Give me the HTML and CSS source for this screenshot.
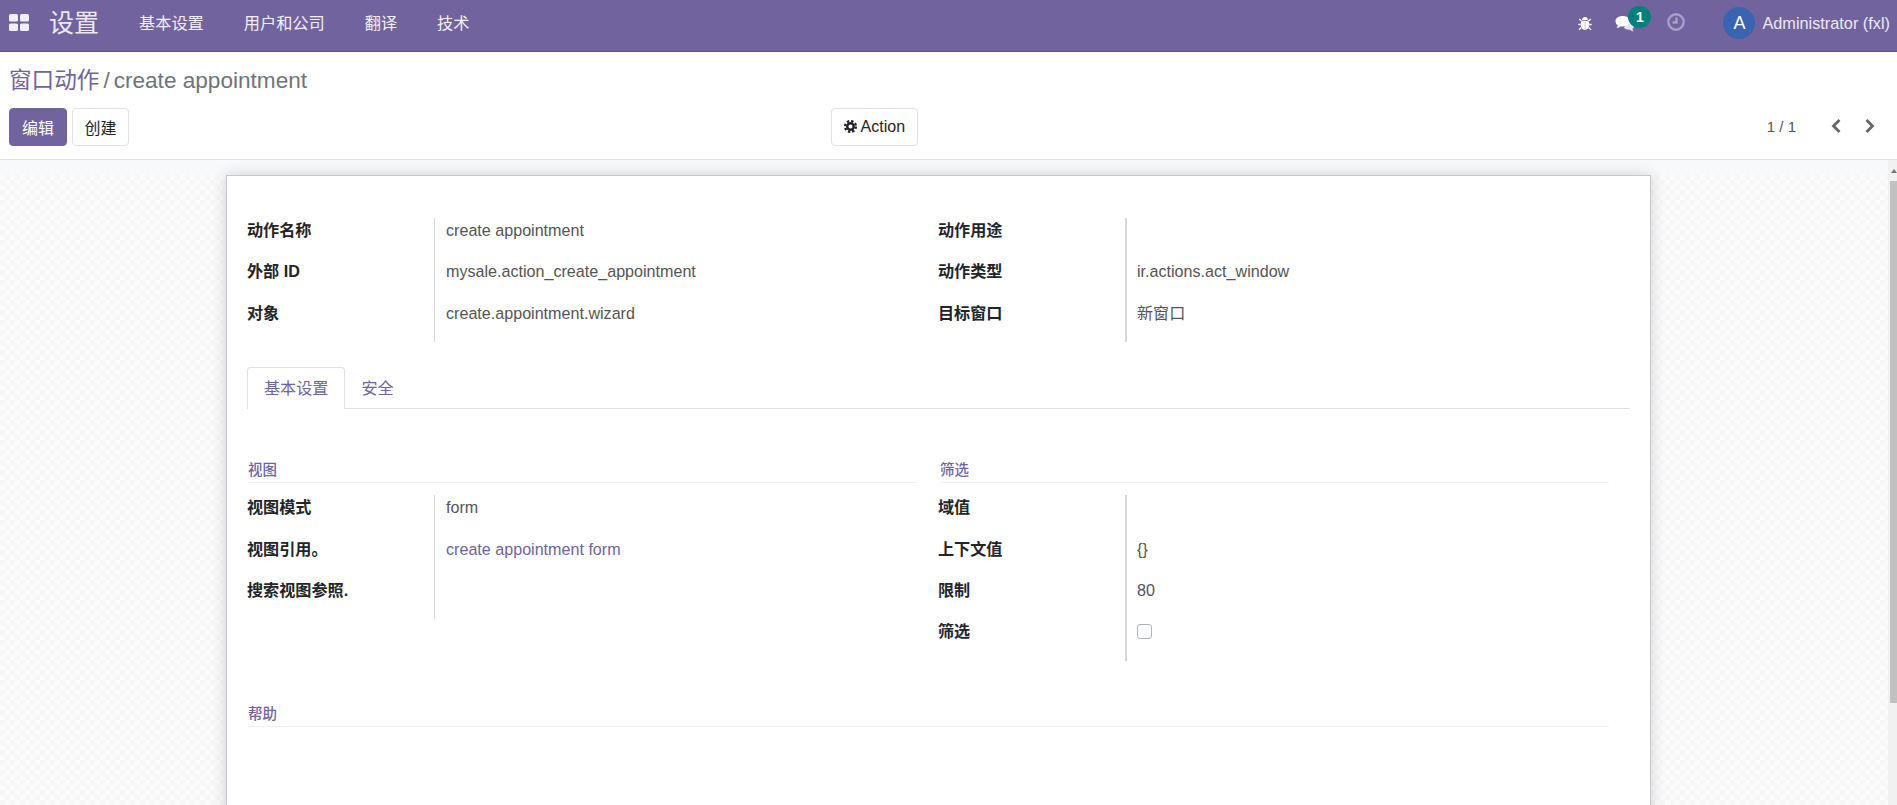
FILE: index.html

```html
<!DOCTYPE html>
<html lang="zh-CN">
<head>
    <meta charset="UTF-8">
    <title>create appointment</title>
    <link rel="stylesheet" href="styles.css">
</head>
<body>
    <!-- Top menu -->
    <header class="navbar">
        <svg class="apps-icon" viewBox="0 0 20 17" width="20" height="17">
            <rect x="0" y="0" width="9" height="7.5" rx="1.6"/>
            <rect x="11" y="0" width="9" height="7.5" rx="1.6"/>
            <rect x="0" y="9.5" width="9" height="7.5" rx="1.6"/>
            <rect x="11" y="9.5" width="9" height="7.5" rx="1.6"/>
        </svg>
        <span class="brand">设置</span>
        <nav class="menu">
            <a>基本设置</a>
            <a>用户和公司</a>
            <a>翻译</a>
            <a>技术</a>
        </nav>
        <div class="systray">
            <svg class="bug-icon" viewBox="0 0 14 15" width="14" height="15">
                <path d="M4 4.2C4 2.2 5.3 1 7 1s3 1.2 3 3.2z"/>
                <path d="M3.6 5h6.8c.7 1 .9 2.2.9 3.6 0 3-1.800 5.400-4.300 5.400S2.700 11.600 2.700 8.600c0-1.400.2-2.600.9-3.600z"/>
                <path class="bug-legs" d="M3.600 5 1.200 3M10.400 5l2.400-2M2.800 8.500H.3M11.200 8.500h2.500M3.300 11.500 1 13.700M10.700 11.500l2.300 2.200"/>
                <path class="bug-stripe" d="M7 6v7.500"/>
            </svg>
            <div class="messages">
                <svg viewBox="0 0 20 17" width="20" height="17">
                    <path class="bubble-back" d="M13 7c3 0 6 1.600 6 4 0 1.300-.7 2.200-1.500 2.900.1.900.6 1.700 1.200 2.300-1.500 0-2.900-.7-3.800-1.500-2.500.2-5-.6-6-2.200z"/>
                    <path d="M7.800 1C12 1 15 3.200 15 6.200s-3 5.200-7.200 5.200c-.8 0-1.500-.1-2.200-.2-1 .9-2.500 1.600-4.100 1.700.7-.8 1.200-1.700 1.300-2.700C1.300 9.300.5 7.900.5 6.200.5 3.200 3.600 1 7.800 1z"/>
                </svg>
                <span class="badge">1</span>
            </div>
            <svg class="clock-icon" viewBox="0 0 18 18" width="18" height="18">
                <circle cx="9" cy="9" r="7.700"/>
                <path d="M9.500 4.500v5h-4"/>
            </svg>
            <span class="avatar">A</span>
            <span class="user-name">Administrator (fxl)</span>
        </div>
    </header>

    <!-- Breadcrumb and buttons -->
    <section class="control-panel">
        <div class="breadcrumb"><a>窗口动作</a><span class="crumb-sep">/</span><span>create appointment</span></div>
        <div class="panel-row">
            <div class="panel-left">
                <button class="btn btn-primary">编辑</button>
                <button class="btn btn-create">创建</button>
            </div>
            <div class="panel-middle">
                <button class="btn btn-action">
                    <svg class="gear-icon" viewBox="0 0 14 14" width="13" height="13">
                        <circle class="gear-teeth" cx="7" cy="7" r="5.800"/>
                        <circle class="gear-ring" cx="7" cy="7" r="3.500"/>
                    </svg>
                    Action
                </button>
            </div>
            <div class="pager">
                <span class="pager-value">1 / 1</span>
                <svg viewBox="0 0 12 16" width="12" height="16"><path d="M9.500 2 3.500 8l6 6"/></svg>
                <svg viewBox="0 0 12 16" width="12" height="16"><path d="M2.500 2l6 6-6 6"/></svg>
            </div>
        </div>
    </section>

    <div class="main">
        <div class="form-bg">
            <div class="sheet">
                <div class="columns">
                    <div class="field-group">
                        <label>动作名称</label><div class="value">create appointment</div>
                        <label>外部 ID</label><div class="value">mysale.action_create_appointment</div>
                        <label>对象</label><div class="value">create.appointment.wizard</div>
                    </div>
                    <div class="field-group group-right">
                        <label>动作用途</label><div class="value"></div>
                        <label>动作类型</label><div class="value">ir.actions.act_window</div>
                        <label>目标窗口</label><div class="value">新窗口</div>
                    </div>
                </div>

                <div class="tabs">
                    <a class="tab active">基本设置</a>
                    <a class="tab">安全</a>
                </div>

                <div class="columns tab-page">
                    <div>
                        <div class="section-title section-left">视图</div>
                        <div class="field-group">
                            <label>视图模式</label><div class="value">form</div>
                            <label>视图引用。</label><div class="value"><a class="link">create appointment form</a></div>
                            <label>搜索视图参照.</label><div class="value"></div>
                        </div>
                    </div>
                    <div>
                        <div class="section-title section-right">筛选</div>
                        <div class="field-group group-right">
                            <label>域值</label><div class="value"></div>
                            <label>上下文值</label><div class="value">{}</div>
                            <label>限制</label><div class="value">80</div>
                            <label>筛选</label><div class="value"><span class="checkbox"></span></div>
                        </div>
                    </div>
                </div>

                <div class="section-title section-help">帮助</div>
            </div>
        </div>
        <div class="scrollbar">
            <span class="scroll-arrow"></span>
            <div class="scroll-thumb"></div>
        </div>
    </div>
</body>
</html>
```

FILE: styles.css

```css
html, body {
    height: 100%;
}
body {
    margin: 0;
    display: flex;
    flex-direction: column;
    overflow: hidden;
    font-family: "Liberation Sans", "Noto Sans CJK SC", sans-serif;
    font-size: 16.130px;
    color: #555;
    background-color: #fff;
}

/* top menu */
.navbar {
    flex: none;
    display: flex;
    align-items: center;
    height: 46px;
    padding-bottom: 5px;
    border-bottom: 1px solid #5f5387;
    background-color: #71639e;
    color: #fff;
}
.apps-icon {
    margin-left: 9px;
    margin-top: -2px;
    fill: #f1eff6;
}
.brand {
    margin-left: 20px;
    margin-top: -4px;
    font-size: 25px;
    color: #ece9f3;
}
.menu {
    display: flex;
    margin-left: 20px;
    margin-top: -2px;
    font-size: 16.200px;
}
.menu a {
    padding: 0 20px;
    color: #f1eff6;
}
.systray {
    margin-left: auto;
    display: flex;
    align-items: center;
    padding-right: 7px;
}
.bug-icon {
    fill: #fff;
    margin-right: 23px;
}
.bug-legs {
    fill: none;
    stroke: #fff;
    stroke-width: 1.3;
}
.bug-stripe {
    fill: none;
    stroke: #c9c3d8;
    stroke-width: 1;
}
.messages {
    position: relative;
    display: flex;
    margin-right: 32px;
}
.messages svg {
    fill: #fff;
}
.bubble-back {
    fill: #e6e2ef;
}
.badge {
    position: absolute;
    top: -9px;
    left: 13px;
    width: 23px;
    height: 22px;
    border-radius: 50%;
    background-color: #00807d;
    color: #fff;
    font-size: 14px;
    font-weight: bold;
    line-height: 22px;
    text-align: center;
}
.clock-icon {
    fill: none;
    stroke: #a99fc6;
    stroke-width: 2.400;
    margin-top: -2px;
}
.avatar {
    margin-left: 38px;
    width: 32px;
    height: 32px;
    border-radius: 50%;
    background-color: #3a64b0;
    color: #fff;
    font-size: 18px;
    line-height: 32px;
    text-align: center;
}
.user-name {
    margin-left: 7px;
    font-size: 16.300px;
    color: #ece9f3;
}

/* breadcrumb and buttons */
.control-panel {
    flex: none;
    height: 107px;
    padding-left: 9px;
    border-bottom: 1px solid #dee2e6;
}
.breadcrumb {
    height: 56px;
    line-height: 58px;
    font-size: 22.600px;
    color: #6c757d;
}
.breadcrumb a {
    color: #71639e;
}
.crumb-sep {
    margin: 0 4px;
}
.panel-row {
    display: grid;
    grid-template-columns: 822px auto 1fr;
}
.panel-left {
    display: flex;
    gap: 5px;
}
.btn {
    height: 38px;
    padding: 0 12px;
    border: 1px solid #dee2e6;
    border-radius: 4px;
    background-color: #fff;
    color: #212529;
    font-family: inherit;
    font-size: 16px;
}
.btn-primary {
    border-color: #71639e;
    background-color: #71639e;
    color: #fff;
}
.btn-create {
    padding: 0 11.500px;
}
.gear-icon {
    vertical-align: -1px;
}
.gear-teeth {
    fill: none;
    stroke: #212529;
    stroke-width: 2.500;
    stroke-dasharray: 2.550 2;
}
.gear-ring {
    fill: none;
    stroke: #212529;
    stroke-width: 2.600;
}
.pager {
    display: flex;
    justify-content: flex-end;
    align-items: center;
    height: 36px;
    padding-right: 21px;
}
.pager-value {
    margin-right: 34px;
    font-size: 15px;
}
.pager svg {
    fill: none;
    stroke: #666;
    stroke-width: 2.800;
}
.pager svg + svg {
    margin-left: 22px;
}

/* form */
.main {
    flex: 1;
    display: flex;
    min-height: 0;
}
.form-bg {
    flex: 1;
    overflow: hidden;
    padding: 15px 0 0 226px;
    background:
        linear-gradient(#f8f9fa, #f8f9fa) top / 100% 15px no-repeat,
        repeating-conic-gradient(#f6f6f6 0 25%, #fbfbfb 0 50%) 0 15px / 10px 10px;
}
.sheet {
    width: 1383px;
    height: 800px;
    padding: 42px 20px 0;
    border: 1px solid #c8c8d3;
    background-color: #fff;
    box-shadow: 0 0 14px rgba(0, 0, 0, 0.16);
}
.columns {
    display: grid;
    grid-template-columns: 691px 1fr;
    align-items: start;
}
.field-group {
    display: grid;
    grid-template-columns: 187px 505px;
    grid-auto-rows: 41.330px;
    line-height: 24px;
}
.field-group label {
    font-weight: bold;
    color: #212529;
}
.value {
    display: flex;
    align-items: flex-start;
    padding-left: 11px;
    border-left: 1px solid #d8d8d8;
}
.group-right .value {
    padding-left: 10px;
    border-left-width: 2px;
}
.link {
    color: #71639e;
}
.checkbox {
    width: 13px;
    height: 13px;
    margin-top: 5px;
    border: 1px solid #adb5bd;
    border-radius: 3px;
    background-color: #fff;
}

/* tabs */
.tabs {
    display: flex;
    margin-top: 25px;
    height: 41px;
    border-bottom: 1px solid #dee2e6;
}
.tab {
    margin-bottom: -1px;
    padding: 0 16px;
    border: 1px solid transparent;
    border-bottom: 0;
    border-radius: 4px 4px 0 0;
    line-height: 41px;
    color: #71639e;
}
.tab + .tab {
    margin-left: -1px;
}
.tab.active {
    border-color: #dee2e6;
    background-color: #fff;
}

/* sections */
.tab-page {
    margin-top: 49.500px;
}
.section-title {
    height: 24px;
    margin-bottom: 12px;
    border-bottom: 1px solid #f1f1f1;
    font-size: 14.500px;
    font-weight: 500;
    line-height: 24px;
    color: #71639e;
}
.section-left {
    margin-left: 1px;
    margin-right: 21px;
}
.section-right {
    margin-left: 2px;
    width: 669px;
}
.section-help {
    margin: 41px 0 0 1px;
    width: 1361px;
}

/* scrollbar */
.scrollbar {
    flex: none;
    position: relative;
    width: 9px;
    padding-top: 21px;
    background-color: #f1f1f1;
}
.scroll-arrow {
    position: absolute;
    top: 9px;
    right: 0;
    border: 3px solid transparent;
    border-top: 0;
    border-bottom: 4px solid #777;
}
.scroll-thumb {
    height: 522px;
    margin-left: 2px;
    background-color: #c1c1c1;
}
```
